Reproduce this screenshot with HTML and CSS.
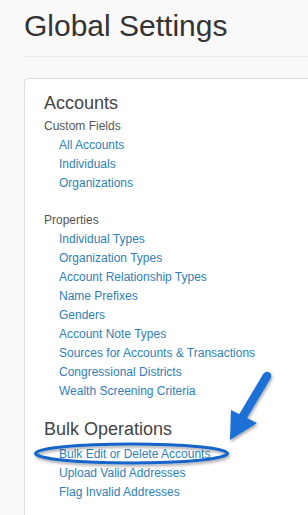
FILE: index.html
```html
<!DOCTYPE html>
<html lang="en">
<head>
    <meta charset="UTF-8">
    <meta name="viewport" content="width=device-width, initial-scale=1.0">
    <title>Global Settings</title>
    <link rel="stylesheet" href="styles.css">
</head>
<body>
    <div class="page">
        <h1>Global Settings</h1>
        <hr>
        <div class="card">
            <h3>Accounts</h3>
            <div class="group">
                <div class="group-title">Custom Fields</div>
                <a href="#">All Accounts</a>
                <a href="#">Individuals</a>
                <a href="#">Organizations</a>
            </div>
            <div class="group">
                <div class="group-title">Properties</div>
                <a href="#">Individual Types</a>
                <a href="#">Organization Types</a>
                <a href="#">Account Relationship Types</a>
                <a href="#">Name Prefixes</a>
                <a href="#">Genders</a>
                <a href="#">Account Note Types</a>
                <a href="#">Sources for Accounts &amp; Transactions</a>
                <a href="#">Congressional Districts</a>
                <a href="#">Wealth Screening Criteria</a>
            </div>
            <h3 class="bulk">Bulk Operations</h3>
            <div class="group">
                <a href="#">Bulk Edit or Delete Accounts</a>
                <a href="#">Upload Valid Addresses</a>
                <a href="#">Flag Invalid Addresses</a>
            </div>
        </div>

        <!-- annotation drawn over the screenshot -->
        <svg class="markup" width="308" height="515" viewBox="0 0 308 515">
            <defs>
                <filter id="shadow" x="-20%" y="-20%" width="140%" height="140%">
                    <feDropShadow dx="1" dy="2" stdDeviation="1.5" flood-color="#000" flood-opacity="0.35"/>
                </filter>
            </defs>
            <g filter="url(#shadow)">
                <ellipse cx="131.5" cy="453.5" rx="96" ry="9.5" fill="none" stroke="#1565c8" stroke-width="3.2"/>
                <line x1="267" y1="376" x2="242" y2="418" stroke="#1a6fd6" stroke-width="8.5" stroke-linecap="round"/>
                <polygon points="231,410 257,423 230,440" fill="#1a6fd6"/>
            </g>
        </svg>
    </div>
</body>
</html>
```

FILE: styles.css
```css
html, body {
    margin: 0;
    padding: 0;
}
body {
    font-family: "Liberation Sans", Arial, sans-serif;
    background-color: #f9f9f9;
    color: #333;
    overflow: hidden;
}
.page {
    position: relative;
    width: 308px;
    height: 515px;
    padding-left: 24px;
    box-sizing: border-box;
    overflow: hidden;
}
h1 {
    font-size: 30px;
    font-weight: normal;
    line-height: 33px;
    margin: 9px 0 0 0;
    color: #333;
}
hr {
    border: none;
    border-top: 1px solid #eaeaea;
    margin: 14px -30px 0 0;
}
.card {
    margin-top: 21px;
    margin-right: -30px;
    padding: 14px 20px 40px 19px;
    background: white;
    border: 1px solid #ddd;
    border-radius: 4px;
    height: 600px;
}
h3 {
    font-size: 18px;
    font-weight: normal;
    line-height: 20px;
    margin: 0 0 4px 0;
    color: #444;
}
h3.bulk {
    margin-top: 18px;
    margin-bottom: 6px;
}
.group {
    display: flex;
    flex-direction: column;
    font-size: 12px;
    line-height: 19px;
    margin-bottom: 18px;
}
.group-title {
    color: #555;
}
.group a {
    color: #2f80b8;
    text-decoration: none;
    padding-left: 15px;
}
.markup {
    position: absolute;
    left: 0;
    top: 0;
}
```
